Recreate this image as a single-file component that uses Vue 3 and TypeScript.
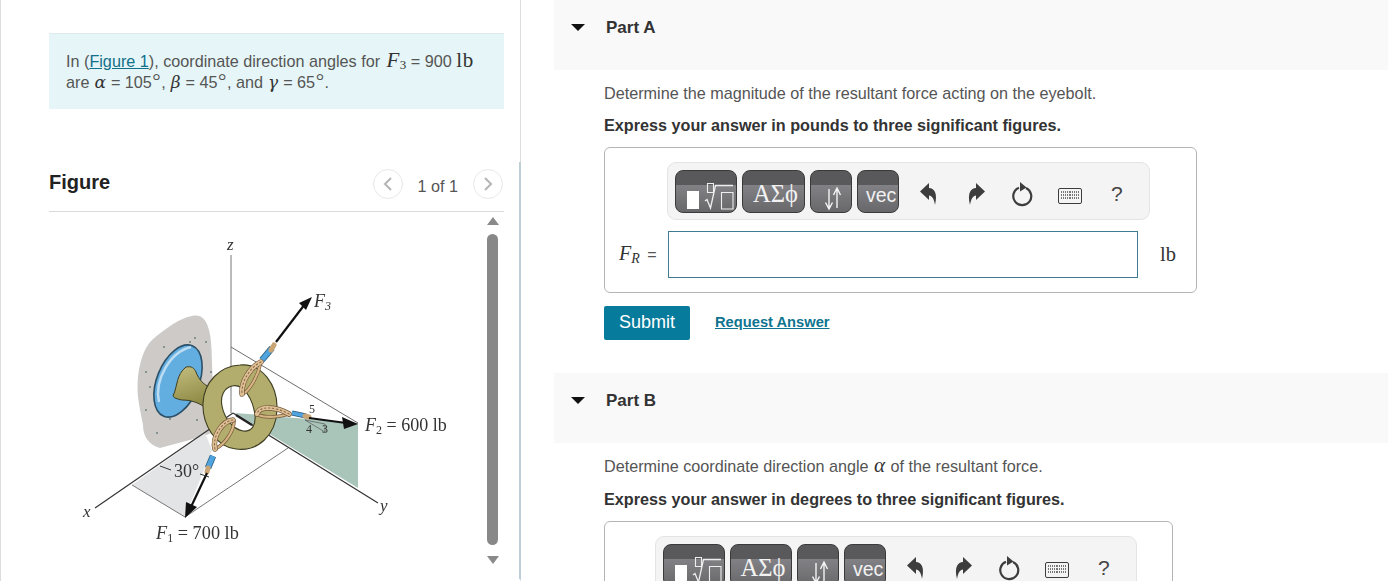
<script setup lang="ts">
interface Part {
  id: string
  title: string
  bold: string
  cls: string
}
const parts: Part[] = [
  { id: 'a', title: 'Part A', bold: 'Express your answer in pounds to three significant figures.', cls: 'part-a' },
  { id: 'b', title: 'Part B', bold: 'Express your answer in degrees to three significant figures.', cls: 'part-b' }
]
const keyRows = [0, 1, 2]
const keyCols = [0, 1, 2, 3, 4, 5, 6, 7, 8, 9]
const ropes: string[] = [
  'M261 362C250 367 241 382 242 394',
  'M289 414C277 407 259 405 257 414',
  'M215 449C212 437 222 421 233 420'
]
const returns: string[] = [
  'M243 394C250 390 258 376 261 362',
  'M258 415C266 418 278 417 289 414',
  'M234 421C234 430 226 444 215 449'
]
</script>

<template>
  <div class="page">
    <aside class="left">
      <div class="intro">
        <p>
          In (<a class="fig-link">Figure 1</a>), coordinate direction angles for
          <span class="m-i big fv">F</span><span class="m sub">3</span> = 900 <span class="m big">lb</span><br />
          are <span class="m-i gk">α</span> = 105<span class="m deg">°</span>, <span class="m-i gk">β</span> = 45<span class="m deg">°</span>, and <span class="m-i gk">γ</span> = 65<span class="m deg">°</span>.
        </p>
      </div>

      <header class="fig-head">
        <h2>Figure</h2>
        <div class="pager">
          <span class="round">
            <svg width="12" height="16" viewBox="0 0 12 16"><path d="M9 2 3 8l6 6" fill="none" stroke="#b4b4b4" stroke-width="2" /></svg>
          </span>
          <span class="count">1 of 1</span>
          <span class="round">
            <svg width="12" height="16" viewBox="0 0 12 16"><path d="m3 2 6 6-6 6" fill="none" stroke="#b4b4b4" stroke-width="2" /></svg>
          </span>
        </div>
      </header>

      <div class="fig-body">
        <svg class="diagram" width="430" height="369" viewBox="49 212 430 369">
          <defs>
            <linearGradient id="neck" x1="0" y1="0" x2="0.3" y2="1">
              <stop offset="0" stop-color="#c4bf80" />
              <stop offset="1" stop-color="#8f8a45" />
            </linearGradient>
          </defs>
          <path d="M138 397C136 372 142 350 152 340 166 328 180 318 192 316 200 314 206 318 209 330 213 345 211 365 214 395L218 430C205 437 185 441 160 448 148 445 143 435 143 425 141 415 139 405 138 397Z" fill="#cdcac8" />
          <g fill="#6f7f80">
            <circle cx="146" cy="372" r="1" /><circle cx="150" cy="387" r="1" /><circle cx="164" cy="347" r="1" /><circle cx="190" cy="342" r="1" />
            <circle cx="206" cy="342" r="1" /><circle cx="158" cy="410" r="1" /><circle cx="157" cy="433" r="1" /><circle cx="197" cy="420" r="1" />
            <circle cx="146" cy="410" r="1" /><circle cx="195" cy="338" r="1" /><circle cx="211" cy="372" r="1" /><circle cx="170" cy="419" r="1" />
          </g>
          <path d="M132 485 205 433 212 450 185 517Z" fill="#e3e4e5" />
          <path d="M235 413 358 423V488Z" fill="#a9c5ba" />
          <path d="M231 255V413" stroke="#777" stroke-width="1" fill="none" />
          <path d="M231 347 358 423" stroke="#6d6d6d" stroke-width="1" fill="none" />
          <path d="M95 508 233 413" stroke="#333" stroke-width="1.2" fill="none" />
          <path d="M233 413 378 503" stroke="#333" stroke-width="1.2" fill="none" />
          <path d="M132 485 185 517 288 448" stroke="#777" stroke-width="1" fill="none" />
          <path d="M236 415 252 425" stroke="#222" stroke-width="2.5" fill="none" />

          <ellipse cx="178" cy="381" rx="21" ry="38" transform="rotate(22 178 381)" fill="#63aee1" stroke="#2b5068" stroke-width="1.6" />
          <path d="M159 402C154 380 170 352 191 347" stroke="#bcdcf2" stroke-width="2.5" fill="none" />
          <path d="M186 367C192 366 194 368 196 372 199 380 204 385 210 387L206 408C198 402 190 400 182 400 177 399 174 398 173 396 178 385 176 375 186 367Z" fill="url(#neck)" stroke="#3e3e22" stroke-width="1" />

          <path fill-rule="evenodd" d="M240 365C262 363 278 385 277 410 276 435 258 452 236 449 216 447 202 425 203 403 204 382 220 366 240 365ZM232 386C224 388 220 396 222 406 224 417 232 429 243 431 252 432 256 425 255 415 253 400 244 383 232 386Z" fill="#b2ad6d" stroke="#3e3e22" stroke-width="1.1" />

          <g fill="none">
            <path d="M272 348 262 360" stroke="#285a78" stroke-width="6.500" />
            <path d="M272 348 262 360" stroke="#4fa3de" stroke-width="5" />
            <path d="M292 413 306 416" stroke="#285a78" stroke-width="5" />
            <path d="M292 413 306 416" stroke="#4fa3de" stroke-width="3.500" />
            <path d="M213 456 208 468" stroke="#285a78" stroke-width="6.500" />
            <path d="M213 456 208 468" stroke="#4fa3de" stroke-width="5" />
          </g>
          <g fill="none" stroke-linecap="round">
            <path v-for="(d, i) in returns" :key="'ro' + i" :d="d" stroke="#75583a" stroke-width="3.500" />
            <path v-for="(d, i) in returns" :key="'rt' + i" :d="d" stroke="#d8b585" stroke-width="2.200" />
            <path v-for="(d, i) in ropes" :key="'o' + i" :d="d" stroke="#75583a" stroke-width="5.500" />
            <path v-for="(d, i) in ropes" :key="'t' + i" :d="d" stroke="#dfc096" stroke-width="4.200" />
            <path v-for="(d, i) in ropes" :key="'d' + i" :d="d" stroke="#8b6b44" stroke-width="1.100" stroke-dasharray="1.500 2.500" />
            <path d="M274 345 271 350M305 416 309 417M208 468 207 472" stroke="#c9a475" stroke-width="5" />
          </g>

          <g stroke="#111" fill="#111">
            <path d="M276 342 305 304" stroke-width="2.2" fill="none" />
            <path d="M312 297 299 303 306 310Z" stroke="none" />
            <path d="M309 418 346 423" stroke-width="2.2" fill="none" />
            <path d="M358 424 342 417 344 429Z" stroke="none" />
            <path d="M207 473 190 509" stroke-width="2.2" fill="none" />
            <path d="M185 518 186 502 197 507Z" stroke="none" />
          </g>
          <path d="M305 420 325 424V432Z" fill="none" stroke="#555" stroke-width=".7" />
          <path d="M160 466 171 470M200 474 209 477" stroke="#333" stroke-width="1" fill="none" />

          <g class="serif">
            <text x="227" y="250" class="it" font-size="17">z</text>
            <text x="314" y="307" class="it" font-size="18">F<tspan font-size="12" dy="3">3</tspan></text>
            <text x="365" y="431" font-size="18"><tspan class="it">F</tspan><tspan font-size="12" dy="3">2</tspan><tspan dy="-3"> = 600 lb</tspan></text>
            <text x="156" y="539" font-size="18.300"><tspan class="it">F</tspan><tspan font-size="12" dy="3">1</tspan><tspan dy="-3"> = 700 lb</tspan></text>
            <text x="174" y="477" font-size="18" fill="#333">30°</text>
            <text x="83" y="517" class="it" font-size="17">x</text>
            <text x="380" y="511" class="it" font-size="17">y</text>
            <text x="309" y="413" font-size="12">5</text>
            <text x="306" y="433" font-size="12">4</text>
            <text x="322" y="433" font-size="12">3</text>
          </g>
        </svg>
        <div class="scroll">
          <span class="tri-up"></span>
          <span class="thumb"></span>
          <span class="tri-down"></span>
        </div>
      </div>
    </aside>

    <main class="right">
      <section v-for="p in parts" :key="p.id" class="part" :class="p.cls">
        <div class="part-head">
          <span class="caret"></span>
          <h3>{{ p.title }}</h3>
        </div>
        <div class="part-body">
          <p v-if="p.id === 'a'" class="q">Determine the magnitude of the resultant force acting on the eyebolt.</p>
          <p v-else class="q">Determine coordinate direction angle <span class="m-i">α</span> of the resultant force.</p>
          <p class="ask">{{ p.bold }}</p>
          <div class="answer">
            <div class="toolbar">
              <div class="btn b1">
                <svg width="60" height="41" viewBox="0 0 60 41">
                  <path d="M11 20H23V38H11Z" fill="#fff" />
                  <path d="M31.500 12.500H37.500V21.500H31.500Z" fill="none" stroke="#eee" stroke-width="1.100" />
                  <path d="M29 30 31 28.500 34.500 37 39.500 14.500H57" fill="none" stroke="#eee" stroke-width="1.300" />
                  <path d="M45.500 21.500H57V38H45.500Z" fill="none" stroke="#eee" stroke-width="1.100" />
                </svg>
              </div>
              <div class="btn b2"><span>ΑΣϕ</span></div>
              <div class="btn b3">
                <svg width="40" height="41" viewBox="0 0 40 41">
                  <path d="M18 18V37M14.500 31.500 18 38 21.500 31.500M26 37V18M22.500 24 26 17 29.500 24" fill="none" stroke="#f4f4f4" stroke-width="1.400" />
                </svg>
              </div>
              <div class="btn b4"><span>vec</span></div>
              <div class="tools">
                <svg class="t1" width="20" height="24" viewBox="0 0 20 24">
                  <path d="M1 9.500 10 1V6C15 6 19 11 16 23 15 17 13 13.500 10 13.500V18Z" fill="#3d3d3d" />
                </svg>
                <svg class="t2" width="20" height="24" viewBox="0 0 20 24">
                  <path d="M19 9.500 10 1V6C5 6 1 11 4 23 5 17 7 13.500 10 13.500V18Z" fill="#3d3d3d" />
                </svg>
                <svg class="t3" width="22" height="26" viewBox="0 0 22 26">
                  <path d="M8 6.800A9 9 0 1 0 15 7" fill="none" stroke="#3d3d3d" stroke-width="2.200" />
                  <path d="M9 1 15.500 6.500 9 10.500Z" fill="#3d3d3d" />
                </svg>
                <span class="kbd">
                  <span v-for="r in keyRows" :key="r" class="kbd-row">
                    <i v-for="c in keyCols" :key="c"></i>
                  </span>
                </span>
                <span class="help">?</span>
              </div>
            </div>
            <div v-if="p.id === 'a'" class="field-row">
              <span class="lhs"><span class="m-i f">F</span><span class="m-i r">R</span> =</span>
              <div class="field"></div>
              <span class="unit">lb</span>
            </div>
          </div>
          <div v-if="p.id === 'a'" class="actions">
            <span class="submit">Submit</span>
            <a class="req">Request Answer</a>
          </div>
        </div>
      </section>
    </main>
  </div>
</template>

<style>
html, body { margin: 0; background: #fff; overflow: hidden; }
</style>

<style scoped>
.page {
  display: flex;
  width: 1388px;
  height: 581px;
  overflow: hidden;
  font-family: "Liberation Sans", Arial, sans-serif;
  color: #444;
  background: #fff;
}
.left {
  position: relative;
  box-sizing: border-box;
  flex: 0 0 521px;
  width: 521px;
  height: 581px;
  padding: 33px 16px 0 48px;
  border-left: 1px solid #dcdcdc;
  border-right: 1px solid #dcdcdc;
}
.left::after {
  content: "";
  position: absolute;
  right: -1px;
  top: 162px;
  bottom: 2px;
  width: 2px;
  background: #bfcdd6;
}
.intro {
  box-sizing: border-box;
  height: 76px;
  padding: 17px 17px 0;
  background: #e6f5f7;
  border-top: 1px solid #dfeaec;
  font-size: 16.2px;
  line-height: 21px;
  color: #555;
}
.intro p { margin: 0; }
.fig-link { color: #12708a; text-decoration: underline; }
.m { font-family: "Liberation Serif", serif; }
.m-i { font-family: "Liberation Serif", serif; font-style: italic; font-size: 19px; line-height: 0; color: #333; }
.big { font-size: 21px; line-height: 0; color: #333; letter-spacing: 0.5px; }
.fv { margin-left: 2px; }
.sub { font-size: 13px; line-height: 0; position: relative; top: 2px; color: #333; }
.gk { font-family: "DejaVu Serif", serif; font-size: 17px; margin: 0 0.5px; }
.gk:first-child { margin-left: 0; }
.deg { font-size: 21px; line-height: 0; margin: 0 0.5px; }
.fig-head {
  box-sizing: border-box;
  display: flex;
  align-items: center;
  justify-content: space-between;
  height: 55px;
  margin-top: 48px;
  padding-bottom: 4px;
  border-bottom: 1px solid #d9d9d9;
}
.fig-head h2 { margin: 0; font-size: 20px; font-weight: 700; color: #222; }
.pager { display: flex; align-items: center; color: #555; font-size: 16.2px; padding-right: 1px; margin-top: 3px; }
.round {
  box-sizing: border-box;
  width: 30px;
  height: 30px;
  border: 1px solid #e8e8e8;
  border-radius: 50%;
  display: flex;
  align-items: center;
  justify-content: center;
  background: #fff;
}
.count { margin: 5px 15px 0 14px; }
.fig-body { display: flex; }
.diagram { display: block; flex: none; filter: blur(0.4px); }
.serif text { font-family: "Liberation Serif", serif; fill: #333; }
.serif .it { font-style: italic; }
.serif tspan.it { font-style: italic; }
.scroll {
  margin-left: 8px;
  width: 11px;
  display: flex;
  flex-direction: column;
  align-items: center;
  padding-top: 5px;
}
.tri-up { width: 0; height: 0; border: 6px solid transparent; border-top: 0; border-bottom: 8px solid #8a8a8a; }
.thumb { width: 11px; height: 311px; margin: 9px 0 11px; border-radius: 6px; background: #888; }
.tri-down { width: 0; height: 0; border: 6px solid transparent; border-bottom: 0; border-top: 8px solid #8a8a8a; }
.right { flex: 1; padding-left: 33px; min-width: 0; }
.part-head {
  box-sizing: border-box;
  display: flex;
  align-items: flex-start;
  height: 70px;
  padding: 18px 0 0 17px;
  background: #f9f9f9;
}
.caret {
  width: 0;
  height: 0;
  margin-top: 6px;
  border-left: 7px solid transparent;
  border-right: 7px solid transparent;
  border-top: 7px solid #111;
}
.part-head h3 { margin: 0 0 0 21px; font-size: 17px; line-height: 19px; font-weight: 700; color: #333; }
.part-body { padding: 14px 0 0 50px; }
.part-b { margin-top: 33px; }
.q { margin: 0; font-size: 16.2px; line-height: 19px; color: #555; }
.q .m-i { font-size: 21px; margin: 0 1px; }
.ask { margin: 13px 0 0; font-size: 16.2px; line-height: 19px; font-weight: 700; color: #333; }
.part-b .ask { margin-top: 14px; }
.answer {
  box-sizing: border-box;
  width: 593px;
  height: 146px;
  margin-top: 12px;
  padding: 14px 0 0 62px;
  border: 1px solid #b5b5b5;
  border-radius: 6px;
}
.part-b .answer { width: 569px; padding-left: 50px; }
.toolbar {
  box-sizing: border-box;
  display: flex;
  align-items: center;
  gap: 5px;
  width: 483px;
  height: 58px;
  padding: 0 0 0 7px;
  background: #f4f4f4;
  border: 1px solid #e4e4e4;
  border-radius: 9px;
}
.part-b .toolbar { width: 482px; }
.btn {
  box-sizing: border-box;
  height: 43px;
  flex: none;
  display: flex;
  align-items: center;
  justify-content: center;
  overflow: hidden;
  border: 1px solid #3a3a3a;
  border-radius: 8px;
  color: #f2f2f2;
  background: linear-gradient(#59595b 0 33%, #828286 33%, #68686b 100%);
}
.b1 { width: 62px; }
.b2 { width: 63px; font-family: "Liberation Serif", serif; font-size: 24.500px; padding: 5px 0 0 4px; }
.b3, .b4 { width: 42px; }
.b4 { font-size: 19.5px; padding: 9px 0 0 8px; justify-content: flex-start; }
.part-b .b2 { width: 62px; }
.tools { display: flex; align-items: center; flex: 1; color: #3d3d3d; position: relative; height: 40px; padding-top: 6px; }
.t1, .t2, .t3 { flex: none; }
.t1 { margin-left: 15px; }
.t2 { margin-left: 27px; }
.t3 { margin-left: 25px; }
.kbd {
  box-sizing: border-box;
  flex: none;
  width: 24px;
  height: 16px;
  margin-left: 25px;
  margin-top: 4px;
  padding: 2px;
  display: flex;
  flex-direction: column;
  gap: 1px;
  background: #f4f4f4;
  border: 1.5px solid #3d3d3d;
  border-radius: 2px;
}
.kbd-row { display: flex; justify-content: space-between; }
.kbd-row i { width: 1px; height: 2px; background: #777; }
.help { flex: none; margin-left: 29px; font-size: 21px; color: #444; }
.field-row { display: flex; align-items: center; margin: 11px 0 0 -48px; }
.lhs { width: 49px; font-size: 16px; color: #555; white-space: nowrap; }
.lhs .f { font-size: 20px; }
.lhs .r { font-size: 14px; position: relative; top: 3px; margin-right: 3px; }
.field { box-sizing: border-box; width: 470px; height: 47px; background: #fff; border: 1px solid #3f7c8f; }
.unit { margin-left: 22px; font-family: "Liberation Serif", serif; font-size: 20.500px; color: #333; }
.actions { display: flex; align-items: center; margin-top: 13px; }
.submit {
  box-sizing: border-box;
  width: 86px;
  height: 34px;
  display: flex;
  align-items: center;
  justify-content: center;
  padding-bottom: 2px;
  background: #077b9c;
  color: #fff;
  border-radius: 2px;
  font-size: 18px;
}
.req { margin: -2px 0 0 25px; font-size: 14.700px; font-weight: 700; color: #0f7490; text-decoration: underline; }
</style>
